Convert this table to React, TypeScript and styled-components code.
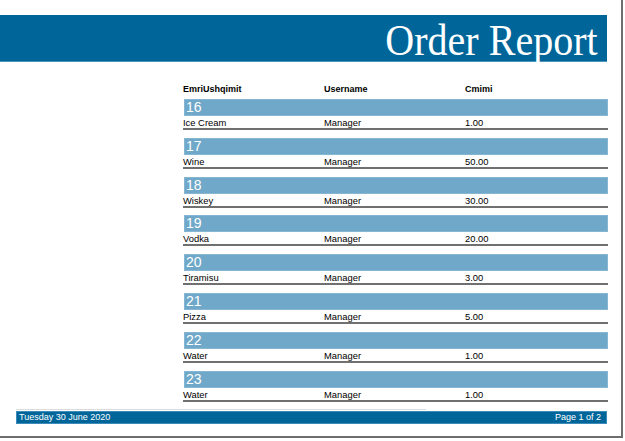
import React from "react";
import styled, { createGlobalStyle } from "styled-components";

const Global = createGlobalStyle`
  html, body { margin: 0; padding: 0; background: #ffffff; }
  body { font-family: "Liberation Sans", Arial, sans-serif; }
`;

const Page = styled.div`
  width: 621px;
  height: 436px;
  border-right: 2px solid #6e6e6e;
  border-bottom: 2px solid #6e6e6e;
  display: flex;
  flex-direction: column;
  overflow: hidden;
`;

const TitleBar = styled.header`
  margin-top: 15px;
  width: 607px;
  height: 47px;
  background: #00669a;
  border-bottom: 1px solid #4d94bd;
  display: flex;
  justify-content: flex-end;
  align-items: center;
  padding-right: 9px;
  box-sizing: border-box;
`;

const Title = styled.h1`
  margin: 0;
  font-family: "Liberation Serif", "Times New Roman", serif;
  font-weight: normal;
  font-size: 45px;
  line-height: 46px;
  color: #ffffff;
  transform: scaleX(0.89);
  transform-origin: right center;
  padding-top: 4px;
`;

const Table = styled.section`
  margin-left: 183px;
  margin-top: 22px;
  width: 425px;
  display: flex;
  flex-direction: column;
`;

const Cols = styled.div`
  display: grid;
  grid-template-columns: 141px 141px 1fr;
`;

const HeadRow = styled(Cols)`
  height: 11px;
  margin-bottom: 4px;
  font-size: 9px;
  line-height: 11px;
  font-weight: bold;
  color: #000;
`;

const Group = styled.div`
  display: flex;
  flex-direction: column;
  margin-bottom: 7.8px;
`;

const GroupBar = styled.div`
  margin-left: 1px;
  height: 17px;
  background: #6fa8c8;
  box-shadow: inset 0 0 0 1px #86b6d1;
  color: #ffffff;
  font-size: 14px;
  line-height: 17px;
  padding-left: 2px;
  margin-bottom: 1px;
`;

const DataRow = styled(Cols)`
  height: 11px;
  font-size: 9.4px;
  line-height: 11px;
  color: #000;
  border-bottom: 2px solid #707070;
`;

const Footer = styled.footer`
  margin-left: 16px;
  display: flex;
  flex-direction: column;
`;

const FooterRule = styled.div`
  width: 410px;
  height: 1px;
  background: #dcdcdc;
  margin-bottom: 1px;
`;

const FooterBar = styled.div`
  width: 591px;
  height: 13px;
  box-sizing: border-box;
  background: #00669a;
  border: 1px solid #3d8bb8;
  color: #ffffff;
  font-size: 9px;
  line-height: 11px;
  display: flex;
  justify-content: space-between;
  padding: 0 5px 0 2px;
`;

const rows = [
  { id: 16, name: "Ice Cream", user: "Manager", price: "1.00" },
  { id: 17, name: "Wine", user: "Manager", price: "50.00" },
  { id: 18, name: "Wiskey", user: "Manager", price: "30.00" },
  { id: 19, name: "Vodka", user: "Manager", price: "20.00" },
  { id: 20, name: "Tiramisu", user: "Manager", price: "3.00" },
  { id: 21, name: "Pizza", user: "Manager", price: "5.00" },
  { id: 22, name: "Water", user: "Manager", price: "1.00" },
  { id: 23, name: "Water", user: "Manager", price: "1.00" },
];

export default function App() {
  return (
    <>
      <Global />
      <Page>
        <TitleBar>
          <Title>Order Report</Title>
        </TitleBar>
        <Table>
          <HeadRow>
            <span>EmriUshqimit</span>
            <span>Username</span>
            <span>Cmimi</span>
          </HeadRow>
          {rows.map((r) => (
            <Group key={r.id}>
              <GroupBar>{r.id}</GroupBar>
              <DataRow>
                <span>{r.name}</span>
                <span>{r.user}</span>
                <span>{r.price}</span>
              </DataRow>
            </Group>
          ))}
        </Table>
        <Footer>
          <FooterRule />
          <FooterBar>
            <span>Tuesday 30 June 2020</span>
            <span>Page 1 of 2</span>
          </FooterBar>
        </Footer>
      </Page>
    </>
  );
}
